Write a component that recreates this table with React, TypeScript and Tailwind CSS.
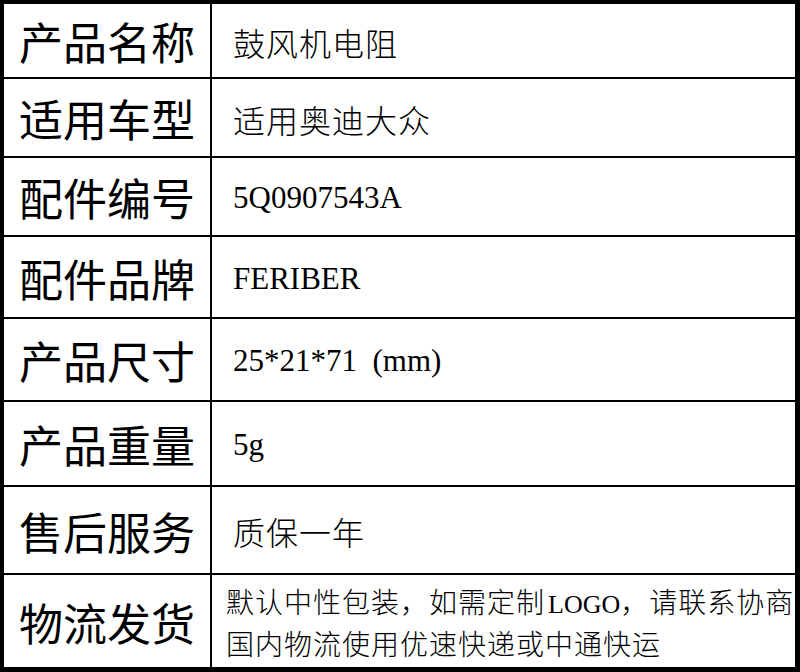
import React from "react";

const rows: { label: string; value: React.ReactNode; h: string; latin?: boolean }[] = [
  { label: "产品名称", value: "鼓风机电阻", h: "h-[75px]" },
  { label: "适用车型", value: "适用奥迪大众", h: "h-[79px]" },
  { label: "配件编号", value: "5Q0907543A", h: "h-[79px]", latin: true },
  { label: "配件品牌", value: "FERIBER", h: "h-[82px]", latin: true },
  { label: "产品尺寸", value: "25*21*71\u2002(mm)", h: "h-[83px]", latin: true },
  { label: "产品重量", value: "5g", h: "h-[85px]", latin: true },
  { label: "售后服务", value: "质保一年", h: "h-[88px]" },
];

export default function App() {
  return (
    <div className="w-[800px] h-[672px] bg-white border-black border-t-4 border-l-4 border-r-[5px] border-b-[5px] flex flex-col text-black">
      {rows.map((r) => (
        <div key={r.label} className={`flex ${r.h} border-b-2 border-black shrink-0`}>
          <div className="w-[208px] shrink-0 border-r-2 border-black flex items-center justify-center pt-[1px] text-[44px] leading-none font-normal [font-family:'Noto_Sans_CJK_SC',sans-serif]">
            {r.label}
          </div>
          <div
            className={`flex-1 flex items-center pl-[21px] pt-[2px] leading-none ${
              r.latin
                ? "text-[31px] [font-family:'Liberation_Serif','Noto_Sans_CJK_SC',serif]"
                : "text-[32px] tracking-[1px] font-light [font-family:'Noto_Sans_CJK_SC',sans-serif]"
            }`}
          >
            {r.value}
          </div>
        </div>
      ))}
      <div className="flex flex-1">
        <div className="w-[208px] shrink-0 border-r-2 border-black flex items-center justify-center pt-[1px] text-[44px] leading-none font-normal [font-family:'Noto_Sans_CJK_SC',sans-serif]">
          物流发货
        </div>
        <div className="flex-1 flex flex-col justify-center pl-[14px] pt-[2px] text-[28px] leading-[39px] tracking-[1px] font-light whitespace-nowrap [font-family:'Noto_Sans_CJK_SC',sans-serif]">
          <div>
            默认中性包装，如需定制
            <span className="ml-[3px] text-[26px] tracking-[0px] [font-family:'Liberation_Serif',serif]">LOGO</span>
            ，请联系协商
          </div>
          <div>国内物流使用优速快递或中通快运</div>
        </div>
      </div>
    </div>
  );
}
